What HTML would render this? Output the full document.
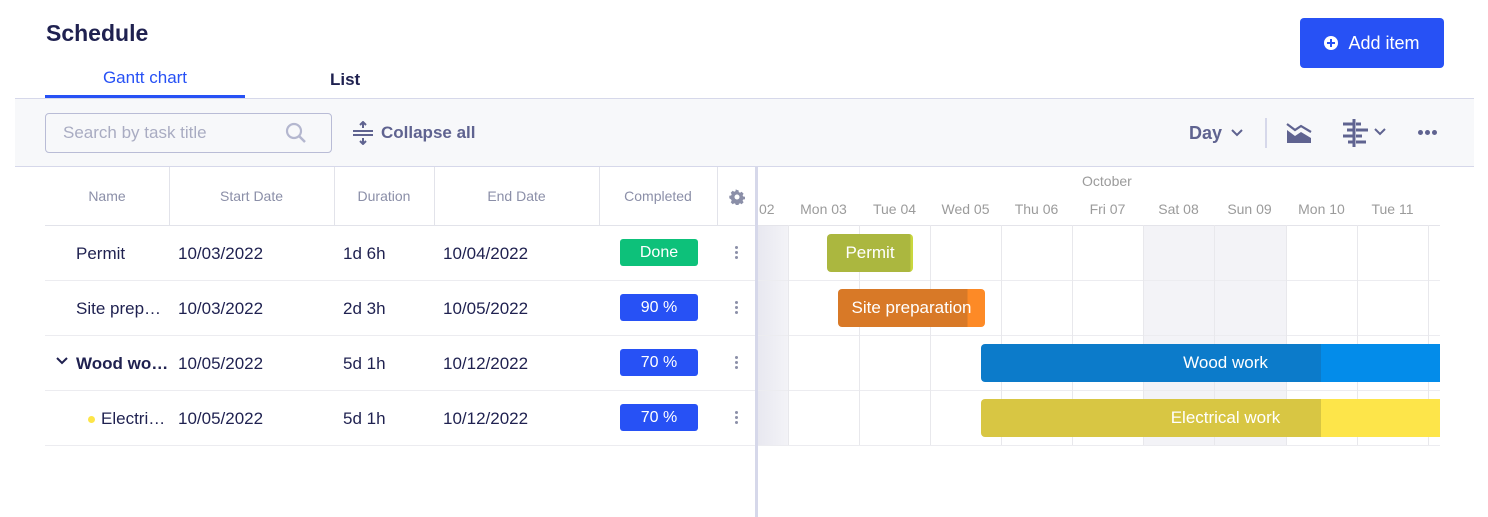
<!DOCTYPE html>
<html><head><meta charset="utf-8"><style>
*{margin:0;padding:0;box-sizing:border-box}
body{width:1488px;height:517px;background:#fff;font-family:"Liberation Sans",sans-serif;position:relative;overflow:hidden;color:#1f2150}
.a{position:absolute}
.hd{color:#8b8fa8;font-size:14px;text-align:center}
.cell{font-size:17px;color:#1f2150;white-space:nowrap}
.badge{position:absolute;left:620px;width:78px;height:27px;border-radius:3px;color:#fff;font-size:16px;text-align:center;line-height:27px}
.dots{position:absolute;left:735px;width:3px}
.dots i{display:block;width:3px;height:3px;background:#8b8fa8;border-radius:50%;margin-bottom:2px}
.vl{position:absolute;top:225px;height:220px;width:1px;background:#e8e8ec}
.day{position:absolute;top:201px;font-size:14px;color:#9b9b9b;text-align:center;width:71px}
.bar{position:absolute;height:38px;border-radius:4px;color:#fff;font-size:17px;line-height:38px;text-align:center;overflow:hidden}
</style></head><body>
<div class="a" style="left:46px;top:20px;font-size:23px;font-weight:600;color:#1f2150">Schedule</div>
<div class="a" style="left:1300px;top:18px;width:144px;height:50px;background:#2751f5;border-radius:4px;color:#fff;font-size:18px;line-height:50px;text-align:center"><span style="display:inline-block;width:14px;height:14px;border-radius:50%;background:#fff;vertical-align:-1px;margin-right:10px;position:relative"><span style="position:absolute;left:3px;top:6px;width:8px;height:2px;background:#2751f5"></span><span style="position:absolute;left:6px;top:3px;width:2px;height:8px;background:#2751f5"></span></span>Add item</div>
<div class="a" style="left:45px;top:68px;width:200px;text-align:center;font-size:17px;color:#2751f5">Gantt chart</div>
<div class="a" style="left:45px;top:95px;width:200px;height:3px;background:#2751f5"></div>
<div class="a" style="left:330px;top:70px;font-size:17px;font-weight:600;color:#1f2150">List</div>
<div class="a" style="left:15px;top:98px;width:1459px;height:69px;background:#f7f8fa;border-top:1px solid #d6d8ea;border-bottom:1px solid #d6d8ea"></div>
<div class="a" style="left:45px;top:113px;width:287px;height:40px;border:1px solid #b9bcd6;border-radius:4px;background:#f7f8fa"></div>
<div class="a" style="left:63px;top:123px;font-size:17px;color:#a9acc2">Search by task title</div>
<svg class="a" style="left:284px;top:121px" width="24" height="24" viewBox="0 0 24 24"><circle cx="10" cy="10" r="7" fill="none" stroke="#b4b7cf" stroke-width="2.2"/><path d="M15 15l6 6" stroke="#b4b7cf" stroke-width="2.5"/></svg>
<svg class="a" style="left:352px;top:121px" width="22" height="24" viewBox="0 0 22 24"><path d="M1 10h20M1 14h20M11 1v6M8 4l3-3 3 3M11 23v-6M8 20l3 3 3-3" fill="none" stroke="#5f6390" stroke-width="2"/></svg>
<div class="a" style="left:381px;top:123px;font-size:17px;font-weight:600;color:#5f6390">Collapse all</div>
<div class="a" style="left:1189px;top:123px;font-size:18px;font-weight:600;color:#5f6390">Day</div>
<svg class="a" style="left:1230px;top:128px" width="14" height="10"><path d="M2 2l5 5 5-5" fill="none" stroke="#5f6390" stroke-width="2"/></svg>
<div class="a" style="left:1265px;top:118px;width:2px;height:30px;background:#d6d8ea"></div>
<svg class="a" style="left:1286px;top:122px" width="26" height="22" viewBox="0 0 26 22"><path d="M1 2l8 6 6-4 10 6" fill="none" stroke="#5f6390" stroke-width="2.2"/><path d="M1 8l8 6 6-4 10 6v5H1z" fill="#5f6390"/></svg>
<svg class="a" style="left:1340px;top:118px" width="48" height="30" viewBox="0 0 48 30"><path d="M14 1v28" stroke="#5f6390" stroke-width="3"/><path d="M3 6h10M16 6h5M7 12h6M16 12h12M3 18h10M16 18h6M8 24h5M16 24h10" stroke="#5f6390" stroke-width="3"/><path d="M35 11l5 5 5-5" fill="none" stroke="#5f6390" stroke-width="2"/></svg>
<div class="a" style="left:1418px;top:130px;height:5px;line-height:0"><span style="display:inline-block;width:5px;height:5px;background:#5f6390;border-radius:50%;margin-right:2px"></span><span style="display:inline-block;width:5px;height:5px;background:#5f6390;border-radius:50%;margin-right:2px"></span><span style="display:inline-block;width:5px;height:5px;background:#5f6390;border-radius:50%"></span></div>

<!-- grid header -->
<div class="a" style="left:169px;top:167px;width:1px;height:58px;background:#e2e3ea"></div>
<div class="a" style="left:334px;top:167px;width:1px;height:58px;background:#e2e3ea"></div>
<div class="a" style="left:434px;top:167px;width:1px;height:58px;background:#e2e3ea"></div>
<div class="a" style="left:599px;top:167px;width:1px;height:58px;background:#e2e3ea"></div>
<div class="a" style="left:717px;top:167px;width:1px;height:58px;background:#e2e3ea"></div>
<div class="a hd" style="left:45px;top:188px;width:124px">Name</div>
<div class="a hd" style="left:169px;top:188px;width:165px">Start Date</div>
<div class="a hd" style="left:334px;top:188px;width:100px">Duration</div>
<div class="a hd" style="left:434px;top:188px;width:165px">End Date</div>
<div class="a hd" style="left:599px;top:188px;width:118px">Completed</div>
<svg class="a" style="left:729px;top:189px" width="16" height="16" viewBox="0 0 16 16"><path d="M8 1l1.5.3.3 1.8 1.3.6 1.5-1 2 2-1 1.5.6 1.3 1.8.3v2.4l-1.8.3-.6 1.3 1 1.5-2 2-1.5-1-1.3.6-.3 1.8H6.8l-.3-1.8-1.3-.6-1.5 1-2-2 1-1.5-.6-1.3L.3 9.2V6.8l1.8-.3.6-1.3-1-1.5 2-2 1.5 1 1.3-.6.3-1.8z" fill="#8b8fa8"/><circle cx="8" cy="8" r="2.5" fill="#fff"/></svg>
<div class="a" style="left:45px;top:225px;width:710px;height:1px;background:#e2e3ea"></div>
<div class="a" style="left:45px;top:280px;width:710px;height:1px;background:#ececf0"></div>
<div class="a" style="left:45px;top:335px;width:710px;height:1px;background:#ececf0"></div>
<div class="a" style="left:45px;top:390px;width:710px;height:1px;background:#ececf0"></div>
<div class="a" style="left:45px;top:445px;width:710px;height:1px;background:#ececf0"></div>

<div class="a cell" style="left:76px;top:244px">Permit</div>
<div class="a cell" style="left:178px;top:244px">10/03/2022</div>
<div class="a cell" style="left:343px;top:244px">1d 6h</div>
<div class="a cell" style="left:443px;top:244px">10/04/2022</div>
<div class="badge" style="top:239px;background:#0dc17a">Done</div>
<div class="dots" style="top:246px"><i></i><i></i><i></i></div>

<div class="a cell" style="left:76px;top:299px">Site prep…</div>
<div class="a cell" style="left:178px;top:299px">10/03/2022</div>
<div class="a cell" style="left:343px;top:299px">2d 3h</div>
<div class="a cell" style="left:443px;top:299px">10/05/2022</div>
<div class="badge" style="top:294px;background:#2751f5">90 %</div>
<div class="dots" style="top:301px"><i></i><i></i><i></i></div>

<svg class="a" style="left:56px;top:357px" width="12" height="8"><path d="M1 1l5 5 5-5" fill="none" stroke="#1f2150" stroke-width="2"/></svg>
<div class="a cell" style="left:76px;top:354px;font-weight:600">Wood wo…</div>
<div class="a cell" style="left:178px;top:354px">10/05/2022</div>
<div class="a cell" style="left:343px;top:354px">5d 1h</div>
<div class="a cell" style="left:443px;top:354px">10/12/2022</div>
<div class="badge" style="top:349px;background:#2751f5">70 %</div>
<div class="dots" style="top:356px"><i></i><i></i><i></i></div>

<div class="a" style="left:88px;top:416px;width:7px;height:7px;border-radius:50%;background:#fde548"></div>
<div class="a cell" style="left:101px;top:409px">Electri…</div>
<div class="a cell" style="left:178px;top:409px">10/05/2022</div>
<div class="a cell" style="left:343px;top:409px">5d 1h</div>
<div class="a cell" style="left:443px;top:409px">10/12/2022</div>
<div class="badge" style="top:404px;background:#2751f5">70 %</div>
<div class="dots" style="top:411px"><i></i><i></i><i></i></div>

<!-- splitter -->
<div class="a" style="left:755px;top:167px;width:3px;height:350px;background:#d6d8ea"></div>

<!-- gantt -->
<div class="a" style="left:758px;top:225px;width:30px;height:220px;background:linear-gradient(90deg,#e8e8f0,#f3f3f7)"></div>
<div class="a" style="left:1143px;top:225px;width:143px;height:220px;background:#f3f3f7"></div>
<div class="a" style="left:758px;top:225px;width:682px;height:1px;background:#e4e4ea"></div>
<div class="a" style="left:758px;top:280px;width:682px;height:1px;background:#ececf0"></div>
<div class="a" style="left:758px;top:335px;width:682px;height:1px;background:#ececf0"></div>
<div class="a" style="left:758px;top:390px;width:682px;height:1px;background:#ececf0"></div>
<div class="a" style="left:758px;top:445px;width:682px;height:1px;background:#ececf0"></div>
<div class="vl" style="left:788px"></div><div class="vl" style="left:859px"></div><div class="vl" style="left:930px"></div><div class="vl" style="left:1001px"></div><div class="vl" style="left:1072px"></div><div class="vl" style="left:1143px"></div><div class="vl" style="left:1214px"></div><div class="vl" style="left:1286px"></div><div class="vl" style="left:1357px"></div><div class="vl" style="left:1428px"></div>
<div class="a" style="left:1082px;top:173px;font-size:14px;color:#9b9b9b">October</div>
<div class="day" style="left:759px;width:20px;text-align:left">02</div>
<div class="day" style="left:788px">Mon 03</div><div class="day" style="left:859px">Tue 04</div><div class="day" style="left:930px">Wed 05</div><div class="day" style="left:1001px">Thu 06</div><div class="day" style="left:1072px">Fri 07</div><div class="day" style="left:1143px">Sat 08</div><div class="day" style="left:1214px">Sun 09</div><div class="day" style="left:1286px">Mon 10</div><div class="day" style="left:1357px">Tue 11</div>

<div class="bar" style="left:827px;top:234px;width:86px;background:linear-gradient(90deg,#abb73f 97%,#c9d73e 97%)">Permit</div>
<div class="bar" style="left:838px;top:289px;width:147px;background:linear-gradient(90deg,#d87927 88%,#fd8a26 88%)">Site preparation</div>
<div class="bar" style="left:981px;top:344px;width:459px;padding-left:30px;border-radius:4px 0 0 4px;background:linear-gradient(90deg,#0c7bca 340px,#038cea 340px)">Wood work</div>
<div class="bar" style="left:981px;top:399px;width:459px;padding-left:30px;border-radius:4px 0 0 4px;background:linear-gradient(90deg,#d8c643 340px,#fde54a 340px)">Electrical work</div>
</body></html>
